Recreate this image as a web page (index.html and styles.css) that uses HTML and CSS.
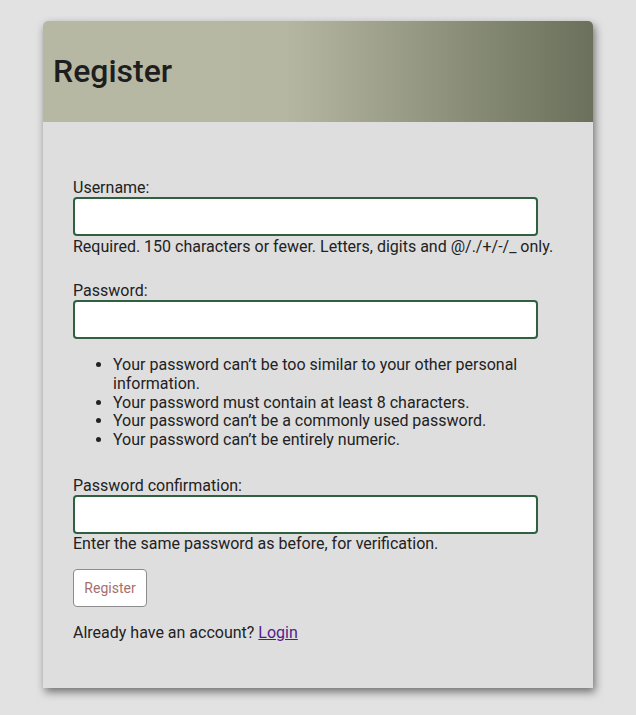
FILE: index.html
```html
<!DOCTYPE html>
<html lang="en">
<head>
<meta charset="utf-8">
<title>Register</title>
<link rel="stylesheet" href="styles.css">
</head>
<body>
<div class="card">
  <div class="card-header">
    <h1 class="title">Register</h1>
  </div>
  <form class="card-body">
    <div class="field">
      <label class="label" for="u">Username:</label>
      <input class="input" id="u" type="text">
      <span class="help">Required. 150 characters or fewer. Letters, digits and @/./+/-/_ only.</span>
    </div>
    <div class="field field-pw">
      <label class="label" for="p1">Password:</label>
      <input class="input" id="p1" type="password">
      <ul class="rules">
        <li>Your password can’t be too similar to your other personal information.</li>
        <li>Your password must contain at least 8 characters.</li>
        <li>Your password can’t be a commonly used password.</li>
        <li>Your password can’t be entirely numeric.</li>
      </ul>
    </div>
    <div class="field field-confirm">
      <label class="label" for="p2">Password confirmation:</label>
      <input class="input" id="p2" type="password">
      <span class="help help-tight">Enter the same password as before, for verification.</span>
    </div>
    <button class="btn" type="button">Register</button>
    <p class="login">Already have an account? <a class="link" href="#">Login</a></p>
  </form>
</div>
</body>
</html>
```

FILE: styles.css
```css
html, body {
  margin: 0;
  padding: 0;
}
body {
  background: #e2e2e2;
  font-family: Roboto, "Liberation Sans", sans-serif;
  font-size: 16px;
  color: #222;
  padding: 21px 0 27px;
}
.card {
  width: 550px;
  margin: 0 auto;
  background: #dedede;
  border-radius: 5px 5px 0 0;
  box-shadow: 2px 4px 9px rgba(0, 0, 0, 0.5);
}
.card-header {
  height: 101px;
  display: flex;
  align-items: center;
  padding: 0 10px;
  border-radius: 5px 5px 0 0;
  background: linear-gradient(to right, #b7b8a3 0%, #b6b7a2 44%, #6a705b 100%);
}
.title {
  margin: 0 0 2px;
  font-size: 32px;
  font-weight: 500;
  color: #1e1e1e;
}
.card-body {
  padding: 56px 30px 46px;
  display: flex;
  flex-direction: column;
}
.field {
  display: flex;
  flex-direction: column;
  align-items: flex-start;
  margin-bottom: 25px;
}
.field-pw {
  margin-bottom: 26px;
}
.field-confirm {
  margin-bottom: 16px;
}
.label {
  display: block;
  line-height: 19px;
}
.input {
  box-sizing: border-box;
  width: 465px;
  height: 39px;
  margin: 0;
  border: 2px solid #2f6040;
  border-radius: 4px;
  background: #fff;
  font: inherit;
  padding: 0 8px;
}
.help {
  display: block;
  line-height: 19px;
  margin-top: 1px;
}
.help-tight {
  margin-top: 0;
}
.rules {
  margin: 17px 0 0;
  padding-left: 40px;
  line-height: 18.75px;
}
.btn {
  align-self: flex-start;
  box-sizing: border-box;
  width: 74px;
  height: 38px;
  background: #fff;
  border: 1px solid #8c8c8c;
  border-radius: 4px;
  color: #a66f6c;
  font-family: Roboto, "Liberation Sans", sans-serif;
  font-size: 14px;
  padding: 0;
  margin: 0;
}
.login {
  margin: 16px 0 0;
  line-height: 19px;
}
.link {
  color: #551a8b;
  text-decoration: underline;
}
```
